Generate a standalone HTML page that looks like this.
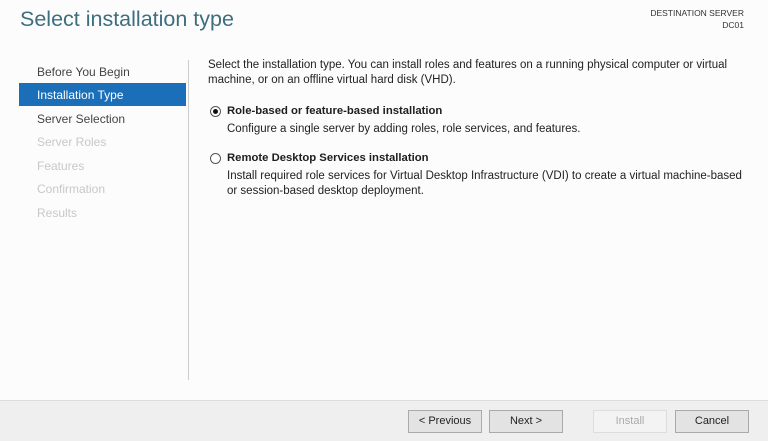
<!DOCTYPE html>
<html><head><style>
body{margin:0;width:768px;height:440px;background:#fcfcfc;font-family:"Liberation Sans",sans-serif;position:relative;overflow:hidden;color:#1e1e1e}
.a{position:absolute;white-space:nowrap}
.t{left:20px;top:7px;font-size:21.5px;color:#3e6e7e}
.ds{right:24px;top:7px;font-size:8.5px;text-align:right;line-height:12px;color:#333}
.nav{left:37px;font-size:12px;color:#444}
.dim{color:#c8c8c8}
.sel{left:19px;top:83px;width:167px;height:23px;background:#1a6fb8}
.div{left:188px;top:60px;width:1px;height:320px;background:#ccc}
.p{font-size:11.5px;color:#222}
.b{font-weight:bold;font-size:11.3px}
.r{width:9px;height:9px;border:1px solid #555;border-radius:50%;background:#fff}
.dot{position:absolute;left:2px;top:2px;width:5px;height:5px;border-radius:50%;background:#111}
.foot{left:0;top:400px;width:768px;height:40px;background:#efefef;border-top:1px solid #ddd}
.btn{top:410px;width:72px;height:21px;border:1px solid #aaa;background:#e3e3e3;font-size:11px;text-align:center;line-height:21px;color:#222}
</style></head><body>
<div class="a t">Select installation type</div>
<div class="a ds">DESTINATION SERVER<br>DC01</div>
<div class="a sel"></div>
<div class="a nav" style="top:65px">Before You Begin</div>
<div class="a nav" style="top:88px;color:#fff">Installation Type</div>
<div class="a nav" style="top:112px">Server Selection</div>
<div class="a nav dim" style="top:135px">Server Roles</div>
<div class="a nav dim" style="top:159px">Features</div>
<div class="a nav dim" style="top:182px">Confirmation</div>
<div class="a nav dim" style="top:206px">Results</div>
<div class="a div"></div>
<div class="a p" style="left:208px;top:59px">Select the installation type. You can install roles and features on a running physical computer or virtual</div>
<div class="a p" style="left:208px;top:74px">machine, or on an offline virtual hard disk (VHD).</div>
<div class="a r" style="left:210px;top:106px"><div class="dot"></div></div>
<div class="a b" style="left:227px;top:105px">Role-based or feature-based installation</div>
<div class="a p" style="left:227px;top:123px">Configure a single server by adding roles, role services, and features.</div>
<div class="a r" style="left:210px;top:153px"></div>
<div class="a b" style="left:227px;top:152px">Remote Desktop Services installation</div>
<div class="a p" style="left:227px;top:170px">Install required role services for Virtual Desktop Infrastructure (VDI) to create a virtual machine-based</div>
<div class="a p" style="left:227px;top:185px">or session-based desktop deployment.</div>
<div class="a foot"></div>
<div class="a btn" style="left:408px">&lt; Previous</div>
<div class="a btn" style="left:489px">Next &gt;</div>
<div class="a btn" style="left:593px;background:#f3f3f3;border-color:#ddd;color:#aaa">Install</div>
<div class="a btn" style="left:675px">Cancel</div>
</body></html>
